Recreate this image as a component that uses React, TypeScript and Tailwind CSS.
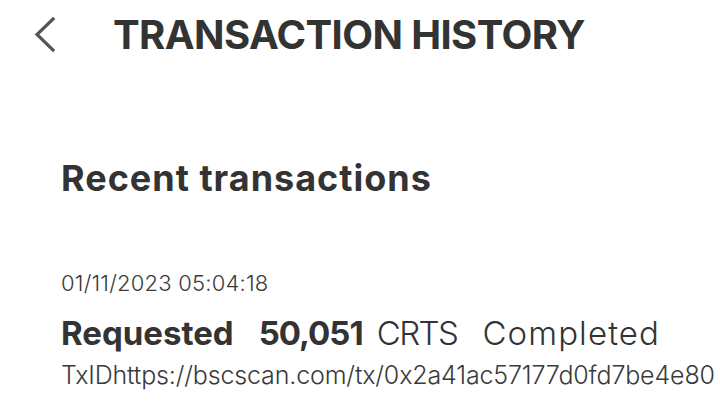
export default function App() {
  return (
    <div
      className="w-[720px] h-[404px] overflow-hidden bg-white text-[#333333]"
      style={{ fontFamily: "Inter, 'Noto Sans', sans-serif" }}
    >
      <header className="flex items-center h-[70px] pl-[34px]">
        <svg width="24" height="36" viewBox="0 0 24 36" className="text-[#555555]">
          <polyline
            points="19,2 3,17.5 19,33"
            fill="none"
            stroke="currentColor"
            strokeWidth="3.2"
            strokeLinecap="square"
          />
        </svg>
        <h1 className="ml-[55px] text-[40px] font-bold tracking-[-0.6px] leading-none">TRANSACTION HISTORY</h1>
      </header>

      <main className="pl-[61px] pt-[90px]">
        <h2 className="text-[36px] font-bold tracking-[1px] leading-none">Recent transactions</h2>

        <div className="mt-[76px] text-[22px] font-light tracking-[0.2px] leading-none text-[#3a3a3a]">
          01/11/2023 05:04:18
        </div>

        <div className="mt-[23px] flex items-baseline text-[33px] leading-none whitespace-nowrap">
          <span className="font-bold">Requested</span>
          <span className="ml-[25px] font-bold tracking-[-1px]">50,051</span>
          <span className="ml-[14px] font-light tracking-[-1.5px]">CRTS</span>
          <span className="ml-[25px] font-light tracking-[1.1px]">Completed</span>
        </div>

        <div className="mt-[13px] text-[25px] font-light tracking-[-0.15px] leading-none whitespace-nowrap text-[#3a3a3a]">
          TxIDhttps://bscscan.com/tx/0x2a41ac57177d0fd7be4e80
        </div>
      </main>
    </div>
  );
}
